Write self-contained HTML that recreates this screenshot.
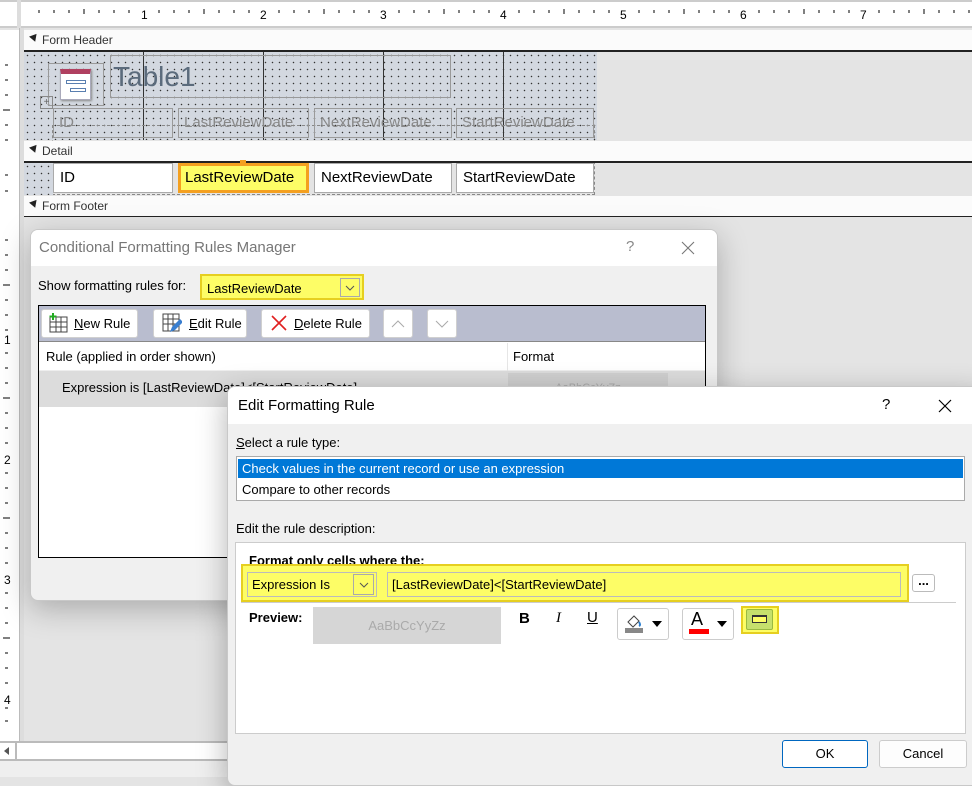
<!DOCTYPE html>
<html><head><meta charset="utf-8"><style>
*{box-sizing:border-box;margin:0;padding:0}
body{width:972px;height:777px;overflow:hidden;background:#e4e4e4;font-family:"Liberation Sans",sans-serif;font-size:13px;color:#000;position:relative}
.a{position:absolute}
.bar{background:#fbfbfb;font-size:12px;color:#333;padding-left:18px;line-height:20px}
.bar:before{content:"";position:absolute;left:6px;top:5px;width:0;height:0;border-left:4px solid transparent;border-right:4px solid transparent;border-top:7px solid #222;transform:rotate(-20deg)}
.grid{background-color:#d3d8e0;background-image:radial-gradient(#333 0.6px,transparent 0.9px);background-size:7px 7px}
.lbl{border:1px solid #9a9a9a;color:#888;font-size:15px;line-height:28px;padding-left:5px}
.tb{background:#fff;border:1px solid #aaa;font-size:15px;line-height:28px;padding-left:6px}
.btn{background:#fff;border:1px solid #d0d0d0;border-radius:3px;height:29px;line-height:27px;font-size:13px}
u{text-decoration:underline}
</style></head><body>
<div class="a" style="left:0;top:0;width:972px;height:28px;background:#fff;border-top:2px solid #ccc;border-bottom:2px solid #ccc"></div>
<div class="a" style="left:17px;top:0;width:4px;height:28px;background:#ddd"></div>
<svg class="a" style="left:0;top:0" width="972" height="28">
<g stroke="#000" stroke-width="1">
<path d="M39 10v3M54 10v3M69 10v3M84 9v5M99 10v3M114 10v3M129 10v3M159 10v3M174 10v3M189 10v3M204 9v5M219 10v3M234 10v3M249 10v3M279 10v3M294 10v3M309 10v3M324 9v5M339 10v3M354 10v3M369 10v3M399 10v3M414 10v3M429 10v3M444 9v5M459 10v3M474 10v3M489 10v3M519 10v3M534 10v3M549 10v3M564 9v5M579 10v3M594 10v3M609 10v3M639 10v3M654 10v3M669 10v3M684 9v5M699 10v3M714 10v3M729 10v3M759 10v3M774 10v3M789 10v3M804 9v5M819 10v3M834 10v3M849 10v3M879 10v3M894 10v3M909 10v3M924 9v5M939 10v3M954 10v3M969 10v3"/></g>
<g font-family="Liberation Sans" font-size="12" fill="#000"><text x="141" y="19">1</text><text x="260" y="19">2</text><text x="380" y="19">3</text><text x="500" y="19">4</text><text x="620" y="19">5</text><text x="740" y="19">6</text><text x="860" y="19">7</text></g>
</svg>
<div class="a" style="left:0;top:30px;width:19px;height:712px;background:#fff"></div>
<div class="a" style="left:19px;top:28px;width:5px;height:714px;background:#ddd;border-left:1px solid #bbb"></div>
<svg class="a" style="left:0;top:28px" width="19" height="714">
<g stroke="#000"><path d="M5 37h3M5 52h3M5 67h3M3 82h7M5 97h3M5 112h3M5 147h3M5 163h3M5 212h3M5 227h3M5 242h3M3 257h7M5 272h3M5 287h3M5 302h3M5 325h3M5 340h3M5 355h3M3 370h7M5 385h3M5 400h3M5 415h3M5 445h3M5 460h3M5 475h3M3 490h7M5 505h3M5 520h3M5 535h3M5 565h3M5 580h3M5 595h3M3 610h7M5 625h3M5 640h3M5 655h3M5 680h3M5 693h3"/></g>
<g font-family="Liberation Sans" font-size="12"><text x="4" y="316">1</text><text x="4" y="436">2</text><text x="4" y="556">3</text><text x="4" y="676">4</text></g>
</svg>
<div class="a bar" style="left:24px;top:30px;width:948px;height:20px">Form Header</div>
<div class="a" style="left:24px;top:50px;width:948px;height:2px;background:#222"></div>
<div class="a grid" style="left:24px;top:52px;width:573px;height:88px"></div>
<div class="a" style="left:143px;top:52px;width:1px;height:88px;background:#333"></div>
<div class="a" style="left:263px;top:52px;width:1px;height:88px;background:#333"></div>
<div class="a" style="left:383px;top:52px;width:1px;height:88px;background:#333"></div>
<div class="a" style="left:503px;top:52px;width:1px;height:88px;background:#333"></div>
<div class="a" style="left:48px;top:63px;width:56px;height:43px;border:1px solid #999"></div>
<div class="a" style="left:60px;top:69px;width:31px;height:31px;background:#fff;border:1px solid #aab;border-top:5px solid #b04060;box-shadow:1px 1px 2px #888"></div>
<div class="a" style="left:66px;top:80px;width:20px;height:4px;border:1px solid #5a7fb0"></div>
<div class="a" style="left:70px;top:88px;width:16px;height:4px;border:1px solid #5a7fb0"></div>
<div class="a" style="left:40px;top:96px;width:13px;height:13px;border:1px solid #888;font-size:10px;color:#666;line-height:11px;text-align:center">+</div>
<div class="a" style="left:110px;top:55px;width:341px;height:43px;border:1px solid #999;font-size:28px;color:#5b6b7c;line-height:42px;padding-left:2px">Table1</div>
<div class="a" style="left:52px;top:125px;width:543px;height:70px;border:1px dashed #888"></div>
<div class="a lbl" style="left:53px;top:108px;width:120px;height:30px">ID</div>
<div class="a lbl" style="left:178px;top:108px;width:131px;height:30px">LastReviewDate</div>
<div class="a lbl" style="left:314px;top:108px;width:138px;height:30px">NextReviewDate</div>
<div class="a lbl" style="left:456px;top:108px;width:138px;height:30px">StartReviewDate</div>
<div class="a bar" style="left:24px;top:141px;width:948px;height:20px">Detail</div>
<div class="a" style="left:24px;top:161px;width:948px;height:2px;background:#222"></div>
<div class="a grid" style="left:24px;top:163px;width:29px;height:32px"></div>
<div class="a tb" style="left:53px;top:163px;width:120px;height:30px">ID</div>
<div class="a tb" style="left:178px;top:163px;width:131px;height:30px;background:#fdfd66;border:3px solid #f4a020;line-height:24px;padding-left:4px">LastReviewDate</div>
<div class="a" style="left:240px;top:160px;width:6px;height:5px;background:#f4a020"></div>
<div class="a tb" style="left:314px;top:163px;width:138px;height:30px">NextReviewDate</div>
<div class="a tb" style="left:456px;top:163px;width:138px;height:30px">StartReviewDate</div>
<div class="a bar" style="left:24px;top:196px;width:948px;height:20px">Form Footer</div>
<div class="a" style="left:24px;top:216px;width:948px;height:1px;background:#222"></div>
<div class="a" style="left:0;top:741px;width:230px;height:20px;background:#fff;border-top:2px solid #bbb;border-bottom:2px solid #bbb"></div>
<div class="a" style="left:15px;top:741px;width:2px;height:20px;background:#bbb"></div>
<div class="a" style="left:4px;top:747px;border-right:5px solid #555;border-top:4px solid transparent;border-bottom:4px solid transparent"></div>
<div class="a" style="left:0;top:761px;width:230px;height:16px;background:#efefef"></div>
<!-- Dialog 1 -->
<div class="a" style="left:30px;top:229px;width:688px;height:372px;background:#f0f0f0;border:1px solid #c8c8c8;border-radius:8px;box-shadow:0 8px 30px rgba(0,0,0,.25);overflow:hidden">
<div class="a" style="left:0;top:0;width:688px;height:36px;background:#fff"></div>
<div class="a" style="left:8px;top:9px;font-size:15px;color:#777">Conditional Formatting Rules Manager</div>
<div class="a" style="left:595px;top:8px;font-size:15px;color:#888">?</div>
<svg class="a" style="left:650px;top:11px" width="14" height="14"><path d="M1 1l12 12M13 1L1 13" stroke="#777" stroke-width="1.1"/></svg>
<div class="a" style="left:7px;top:48px">Show formatting rules for:</div>
<div class="a" style="left:169px;top:44px;width:164px;height:26px;background:#fdfd66;border:2px solid #e6cf20"></div>
<div class="a" style="left:176px;top:51px">LastReviewDate</div>
<div class="a" style="left:309px;top:48px;width:20px;height:19px;border:1px solid #aaa"></div>
<svg class="a" style="left:314px;top:55px" width="10" height="6"><path d="M1 1l4 4 4-4" stroke="#555" fill="none"/></svg>
<div class="a" style="left:7px;top:75px;width:668px;height:253px;border:1px solid #000;background:#fff">
<div class="a" style="left:0;top:0;width:666px;height:36px;background:#b9bdcf;border-bottom:1px solid #888"></div>
<div class="a btn" style="left:2px;top:3px;width:97px;padding-left:32px"><u>N</u>ew Rule</div>
<svg class="a" style="left:10px;top:7px" width="20" height="20"><rect x="1" y="4" width="17" height="15" fill="#fff" stroke="#444"/><path d="M1 9h17M1 14h17M7 4v15M12 4v15" stroke="#444"/><path d="M4 0v7M0.5 3.5h7" stroke="#2a2" stroke-width="2"/></svg>
<div class="a btn" style="left:114px;top:3px;width:94px;padding-left:35px"><u>E</u>dit Rule</div>
<svg class="a" style="left:123px;top:7px" width="20" height="20"><rect x="1" y="1" width="16" height="17" fill="#fff" stroke="#444"/><path d="M1 6h16M1 11h16M6 1v17M11 1v17" stroke="#444"/><path d="M8 19l2-5 8-8 3 3-8 8z" fill="#3a7fd0"/></svg>
<div class="a btn" style="left:222px;top:3px;width:109px;padding-left:32px"><u>D</u>elete Rule</div>
<svg class="a" style="left:232px;top:9px" width="16" height="16"><path d="M1 1l14 14M15 1L1 15" stroke="#e02020" stroke-width="1.6"/></svg>
<div class="a btn" style="left:344px;top:3px;width:30px"></div>
<svg class="a" style="left:352px;top:14px" width="14" height="8"><path d="M1 7l6-6 6 6" stroke="#aaa" fill="none"/></svg>
<div class="a btn" style="left:388px;top:3px;width:30px"></div>
<svg class="a" style="left:396px;top:14px" width="14" height="8"><path d="M1 1l6 6 6-6" stroke="#aaa" fill="none"/></svg>
<div class="a" style="left:0;top:37px;width:666px;height:28px;border-bottom:1px solid #eee"></div>
<div class="a" style="left:7px;top:43px">Rule (applied in order shown)</div>
<div class="a" style="left:468px;top:37px;width:1px;height:28px;background:#e6e6e6"></div>
<div class="a" style="left:474px;top:43px">Format</div>
<div class="a" style="left:0;top:65px;width:666px;height:36px;background:#dcdcdc"></div>
<div class="a" style="left:23px;top:74px">Expression is [LastReviewDate]&lt;[StartReviewDate]</div>
<div class="a" style="left:469px;top:67px;width:160px;height:34px;background:#cfcfcf;color:#aaa;text-align:center;line-height:30px;font-size:11px">AaBbCcYyZz</div>
</div>
</div>
<!-- Dialog 2 -->
<div class="a" style="left:227px;top:386px;width:760px;height:400px;background:#f0f0f0;border:1px solid #c8c8c8;border-radius:8px;box-shadow:0 8px 30px rgba(0,0,0,.3);overflow:hidden">
<div class="a" style="left:0;top:0;width:760px;height:37px;background:#fff"></div>
<div class="a" style="left:10px;top:10px;font-size:15px">Edit Formatting Rule</div>
<div class="a" style="left:654px;top:9px;font-size:15px">?</div>
<svg class="a" style="left:710px;top:12px" width="14" height="14"><path d="M1 1l12 12M13 1L1 13" stroke="#000" stroke-width="1.2"/></svg>
<div class="a" style="left:8px;top:48px"><u>S</u>elect a rule type:</div>
<div class="a" style="left:8px;top:69px;width:729px;height:45px;background:#fff;border:1px solid #aaa">
<div class="a" style="left:1px;top:2px;width:725px;height:19px;background:#0078d7;color:#fff;padding-left:4px;line-height:19px">Check values in the current record or use an expression</div>
<div class="a" style="left:5px;top:23px;line-height:19px">Compare to other records</div>
</div>
<div class="a" style="left:8px;top:134px">Edit the rule description:</div>
<div class="a" style="left:7px;top:155px;width:731px;height:192px;background:#fff;border:1px solid #ccc">
<div class="a" style="left:13px;top:10px;font-weight:bold">F<u>o</u>rmat only cells where the:</div>
<div class="a" style="left:5px;top:21px;width:668px;height:38px;background:#fdfd66;border:2px solid #e6cf20"></div>
<div class="a" style="left:11px;top:29px;width:130px;height:25px;border:1px solid #bbb;padding-left:4px;line-height:23px">Expression Is</div>
<div class="a" style="left:117px;top:31px;width:21px;height:21px;border:1px solid #aaa"></div>
<svg class="a" style="left:123px;top:39px" width="10" height="6"><path d="M1 1l4 4 4-4" stroke="#555" fill="none"/></svg>
<div class="a" style="left:151px;top:29px;width:514px;height:25px;border:1px solid #bbb;padding-left:4px;line-height:23px">[LastReviewDate]&lt;[StartReviewDate]</div>
<div class="a" style="left:676px;top:31px;width:23px;height:18px;border:1px solid #bbb;border-radius:3px;background:#fff;text-align:center;line-height:12px;font-weight:bold">...</div>
<div class="a" style="left:5px;top:59px;width:715px;height:1px;background:#ccc"></div>
<div class="a" style="left:13px;top:67px;font-weight:bold">Preview:</div>
<div class="a" style="left:77px;top:64px;width:188px;height:37px;background:#d6d6d6;color:#aaa;text-align:center;line-height:37px;font-size:13px">AaBbCcYyZz</div>
<div class="a" style="left:283px;top:67px;font-weight:bold;font-size:15px">B</div>
<div class="a" style="left:320px;top:67px;font-style:italic;font-size:15px;font-family:'Liberation Serif',serif">I</div>
<div class="a" style="left:351px;top:66px;font-size:15px;text-decoration:underline">U</div>
<div class="a" style="left:381px;top:65px;width:52px;height:32px;border:1px solid #ccc;border-radius:3px;background:#fff"></div>
<svg class="a" style="left:388px;top:70px" width="20" height="20"><path d="M4 9l6-6 5 5-6 6z" fill="none" stroke="#444"/><path d="M15 9q2 3 0 4" stroke="#2a7fd0" stroke-width="2" fill="none"/><rect x="1" y="15" width="18" height="5" fill="#888"/></svg>
<div class="a" style="left:416px;top:78px;border-top:6px solid #000;border-left:5px solid transparent;border-right:5px solid transparent"></div>
<div class="a" style="left:446px;top:65px;width:52px;height:32px;border:1px solid #ccc;border-radius:3px;background:#fff"></div>
<div class="a" style="left:455px;top:66px;font-size:18px">A</div>
<div class="a" style="left:453px;top:86px;width:20px;height:5px;background:#f00"></div>
<div class="a" style="left:481px;top:78px;border-top:6px solid #000;border-left:5px solid transparent;border-right:5px solid transparent"></div>
<div class="a" style="left:505px;top:63px;width:38px;height:28px;background:#fdfd66;border:2px solid #e6cf20"></div>
<div class="a" style="left:510px;top:66px;width:27px;height:21px;background:#c6e06c;border:1px solid #9aba40;border-radius:2px"></div>
<div class="a" style="left:516px;top:72px;width:15px;height:8px;border:1px solid #333;border-top:2px solid #333;background:#fdfd66"></div>
</div>
<div class="a" style="left:554px;top:353px;width:86px;height:28px;background:#fff;border:1px solid #0067c0;border-radius:3px;text-align:center;line-height:26px">OK</div>
<div class="a" style="left:651px;top:353px;width:88px;height:28px;background:#fdfdfd;border:1px solid #ccc;border-radius:3px;text-align:center;line-height:26px">Cancel</div>
</div>
</body></html>
